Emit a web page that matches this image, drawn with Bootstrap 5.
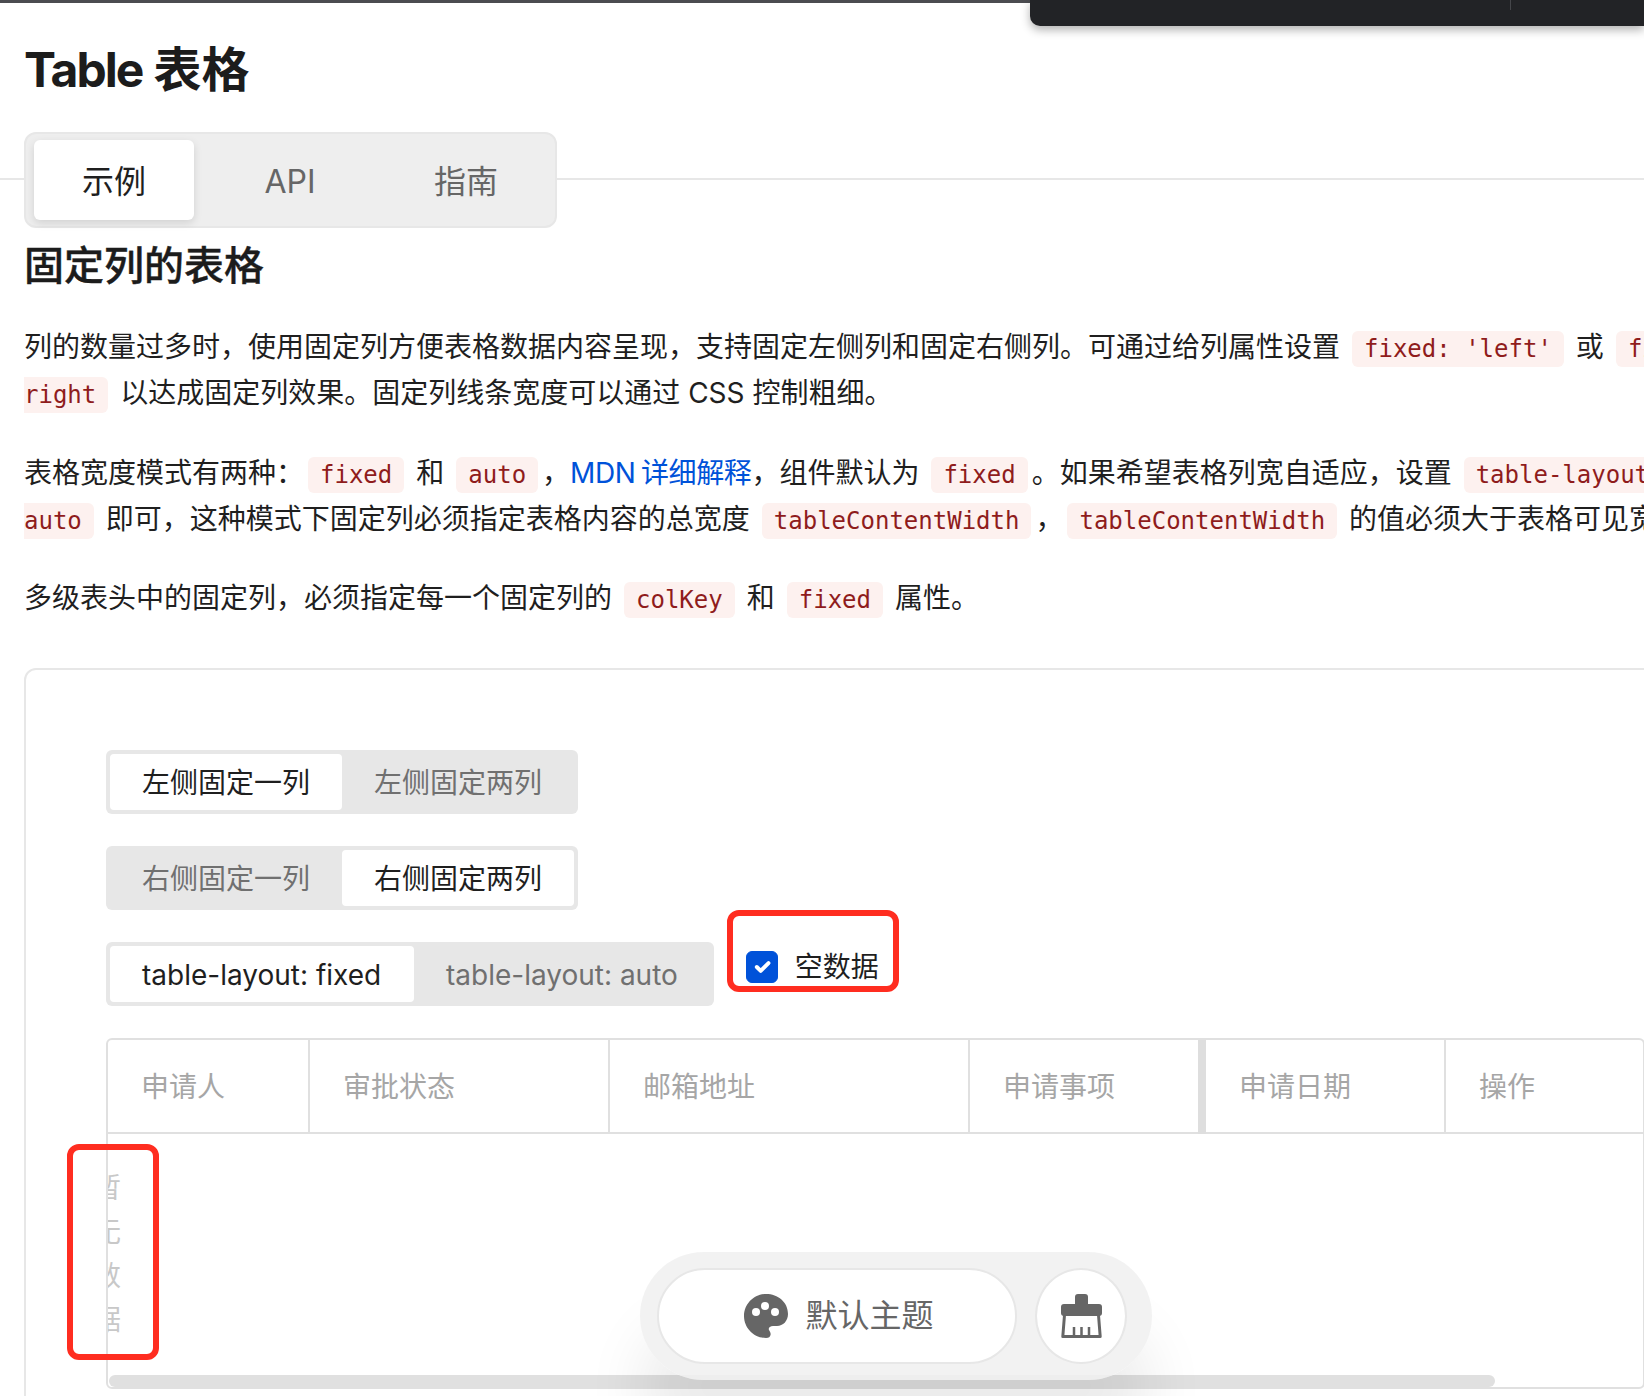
<!DOCTYPE html>
<html lang="zh-CN">
<head>
<meta charset="utf-8"/>
<meta content="width=device-width, initial-scale=1.0" name="viewport"/>
<title>Table 表格</title>
<link href="https://cdn.jsdelivr.net/npm/bootstrap@5.3.0/dist/css/bootstrap.min.css" rel="stylesheet"/>
<style>
    html, body {
      height: 1396px;
      overflow: hidden;
    }
    body {
      background: #fff;
      color: #1f1f1f;
      font-family: Inter, "Noto Sans CJK SC", sans-serif;
      font-size: 28px;
      line-height: 46px;
    }
    .top-line {
      position: absolute;
      top: 0; left: 0; right: 0;
      height: 3px;
      background: #4b4c50;
    }
    .top-panel {
      position: absolute;
      top: 0; left: 1030px; right: 0;
      height: 26px;
      background: #222326;
      border-bottom-left-radius: 10px;
      box-shadow: 0 4px 10px rgba(0,0,0,.3);
    }
    .top-panel i {
      position: absolute;
      top: 0; left: 480px;
      width: 1px; height: 10px;
      background: #45464a;
    }
    .doc-title {
      margin: 42px 0 0 24px;
      font-size: 48px;
      line-height: 56px;
      font-weight: 700;
      color: #1c1c1c;
    }
    .doc-title span {
      letter-spacing: -2px;
    }
    .tab-strip {
      margin-top: 34px;
      padding-left: 24px;
      background: linear-gradient(#e7e7e7, #e7e7e7) 0 46px / 100% 2px no-repeat;
    }
    .tab-box {
      width: 533px;
      height: 96px;
      padding: 6px 8px;
      gap: 16px;
      background: #eeeeee;
      border: 2px solid #e7e7e7;
      border-radius: 12px;
    }
    .tab-item {
      width: 160px;
      height: 80px;
      font-size: 32px;
      line-height: 84px;
      text-align: center;
      color: #666;
      border-radius: 6px;
    }
    .tab-item.on {
      background: #fff;
      color: #1f1f1f;
      box-shadow: 0 3px 8px rgba(0,0,0,.12);
    }
    .doc-sub {
      margin: 10px 0 0 24px;
      font-size: 40px;
      line-height: 56px;
      font-weight: 500;
      -webkit-text-stroke: .4px #1c1c1c;
      color: #1c1c1c;
    }
    .doc-p {
      margin: 33px 0 0 24px;
      white-space: nowrap;
    }
    .doc-p.first {
      margin-top: 30px;
    }
    .doc-p.second {
      margin-top: 34px;
    }
    .doc-code {
      font-family: "DejaVu Sans Mono", "Liberation Mono", monospace;
      font-size: 24px;
      line-height: 1;
      color: #8f1c1c;
      background: #fdf1ef;
      padding: 4px 12px;
      margin: 0 12px;
      border-radius: 6px;
    }
    .doc-code.near-l { margin-left: 4px; }
    .doc-code.near-r { margin-right: 4px; }
    .doc-p a {
      color: #0052d9;
      text-decoration: none;
      word-spacing: -2px;
      letter-spacing: -.4px;
    }
    .demo-box {
      width: 1703px;
      margin: 47px 0 0 24px;
      padding: 80px;
      border: 2px solid #e7e7e7;
      border-radius: 12px;
    }
    .mt-row {
      margin-top: 32px;
    }
    .seg-box {
      padding: 4px;
      background: #e7e7e7;
      border-radius: 6px;
    }
    .seg-item {
      height: 56px;
      padding: 0 32px;
      line-height: 58px;
      color: #707070;
      border-radius: 4px;
    }
    .seg-item.on {
      background: #fff;
      color: #1f1f1f;
    }
    .seg-item.wide {
      min-width: 304px;
    }
    .empty-check {
      align-self: flex-start;
      margin: 9px 0 0 32px;
      min-height: 0;
      padding: 0;
      line-height: 32px;
    }
    .empty-check .form-check-input {
      float: none;
      width: 32px; height: 32px;
      margin: 0 17px 0 0;
      border-radius: 6px;
      background-color: #0052d9;
      border-color: #0052d9;
      background-size: 26px;
    }
    .tbl-wrap {
      height: 351px;
      margin-top: 32px;
      border: 2px solid #e0e0e0;
      border-radius: 6px;
      overflow: hidden;
    }
    .data-tbl {
      width: 1540px;
      table-layout: fixed;
      margin: 0;
    }
    .data-tbl th {
      height: 93px;
      padding: 2px 32px 0 33px;
      font-weight: 400;
      color: #a6a6a6;
      border-bottom: 2px solid #e0e0e0;
      border-right: 2px solid #e0e0e0;
      vertical-align: middle;
    }
    .data-tbl th.fix-edge {
      border-right: 8px solid #dedede;
    }
    .empty-txt {
      width: 28px;
      margin: 32px 0 0 -15px;
      line-height: 44px;
      color: #c8c8c8;
    }
    .scroll-bar {
      width: 1386px;
      height: 12px;
      margin: auto 0 0 1px;
      background: #e0e0e0;
      border-radius: 6px;
    }
    .float-bar {
      position: absolute;
      left: 640px; top: 1252px;
      width: 512px; height: 128px;
      padding: 16px 16px 16px 17px;
      gap: 18px;
      background: rgba(240,240,240,.85);
      border-radius: 64px;
      box-shadow: 0 70px 60px rgba(0,0,0,.08);
    }
    .float-theme {
      width: 360px;
      padding-left: 4px;
      gap: 17px;
      font-size: 32px;
      color: #666;
      background: #fff;
      border: 2px solid #e7e7e7;
      border-radius: 48px;
    }
    .float-clean {
      width: 92px;
      background: #fff;
      border: 2px solid #e7e7e7;
      border-radius: 50%;
    }
    .mark-red {
      position: absolute;
      border: 6px solid #ff2d20;
      border-radius: 12px;
    }
    .mark-check { left: 727px; top: 910px; width: 172px; height: 82px; }
    .mark-empty { left: 67px; top: 1144px; width: 92px; height: 216px; }
  </style>
</head>
<body>
<div class="top-line"></div>
<div class="top-panel"><i></i></div>

<h1 class="doc-title"><span>Table</span> 表格</h1>

<div class="tab-strip">
  <div class="tab-box d-flex">
    <div class="tab-item on">示例</div>
    <div class="tab-item">API</div>
    <div class="tab-item">指南</div>
  </div>
</div>

<h2 class="doc-sub">固定列的表格</h2>

<p class="doc-p first">列的数量过多时，使用固定列方便表格数据内容呈现，支持固定左侧列和固定右侧列。可通过给列属性设置<code class="doc-code">fixed: 'left'</code>或<code class="doc-code">fixed:<br>right</code>以达成固定列效果。固定列线条宽度可以通过 CSS 控制粗细。</p>
<p class="doc-p second">表格宽度模式有两种：<code class="doc-code near-l">fixed</code>和<code class="doc-code near-r">auto</code>，<a href="#">MDN 详细解释</a>，组件默认为<code class="doc-code near-r">fixed</code>。如果希望表格列宽自适应，设置<code class="doc-code">table-layout:<br>auto</code>即可，这种模式下固定列必须指定表格内容的总宽度<code class="doc-code near-r">tableContentWidth</code>，<code class="doc-code near-l">tableContentWidth</code>的值必须大于表格可见宽度。</p>
<p class="doc-p">多级表头中的固定列，必须指定每一个固定列的<code class="doc-code">colKey</code>和<code class="doc-code">fixed</code>属性。</p>

<div class="demo-box">
  <div class="d-flex flex-column align-items-start gap-0">
    <div class="seg-box d-inline-flex">
      <div class="seg-item on">左侧固定一列</div>
      <div class="seg-item">左侧固定两列</div>
    </div>
    <div class="seg-box d-inline-flex mt-row">
      <div class="seg-item">右侧固定一列</div>
      <div class="seg-item on">右侧固定两列</div>
    </div>
    <div class="d-flex mt-row">
      <div class="seg-box d-inline-flex">
        <div class="seg-item on wide">table-layout: fixed</div>
        <div class="seg-item">table-layout: auto</div>
      </div>
      <div class="form-check empty-check d-flex align-items-center">
        <input class="form-check-input" type="checkbox" id="emptyData" checked>
        <label class="form-check-label" for="emptyData">空数据</label>
      </div>
    </div>
  </div>

  <div class="tbl-wrap d-flex flex-column">
    <table class="data-tbl">
      <colgroup>
        <col style="width:201px"><col style="width:300px"><col style="width:360px"><col style="width:233px"><col style="width:243px"><col>
      </colgroup>
      <thead>
        <tr>
          <th>申请人</th>
          <th>审批状态</th>
          <th>邮箱地址</th>
          <th class="fix-edge">申请事项</th>
          <th>申请日期</th>
          <th>操作</th>
        </tr>
      </thead>
    </table>
    <div class="empty-txt">暂无数据</div>
    <div class="scroll-bar"></div>
  </div>
</div>

<div class="float-bar d-flex">
  <div class="float-theme d-flex align-items-center justify-content-center">
    <svg width="44" height="44" viewBox="0 0 44 44">
      <path fill="#666" d="M22 0C34 0 44 8 44 20C44 27 39 32 33 32H29C26 32 24 34 25 36C26 38 27 39 26.500 41C26 43 25 44 22 44C10 44 0 34 0 22C0 10 10 0 22 0Z"/>
      <circle cx="12" cy="18" r="4" fill="#fff"/><circle cx="21" cy="12" r="4" fill="#fff"/><circle cx="31" cy="18" r="4" fill="#fff"/>
    </svg>
    <span>默认主题</span>
  </div>
  <div class="float-clean d-flex align-items-center justify-content-center">
    <svg width="41" height="44" viewBox="0 0 41 44">
      <rect x="14" y="0" width="13" height="14" rx="3" fill="#666"/>
      <rect x="0" y="10" width="41" height="12" rx="3" fill="#666"/>
      <path d="M3.500 21L1.800 42.500H39.200L37.500 21" fill="none" stroke="#666" stroke-width="3" stroke-linejoin="round"/>
      <path d="M13 33V42M20.500 33V42M28 33V42" stroke="#666" stroke-width="2.500"/>
    </svg>
  </div>
</div>

<div class="mark-red mark-check"></div>
<div class="mark-red mark-empty"></div>

<script src="https://cdn.jsdelivr.net/npm/bootstrap@5.3.0/dist/js/bootstrap.bundle.min.js"></script>
</body>
</html>
